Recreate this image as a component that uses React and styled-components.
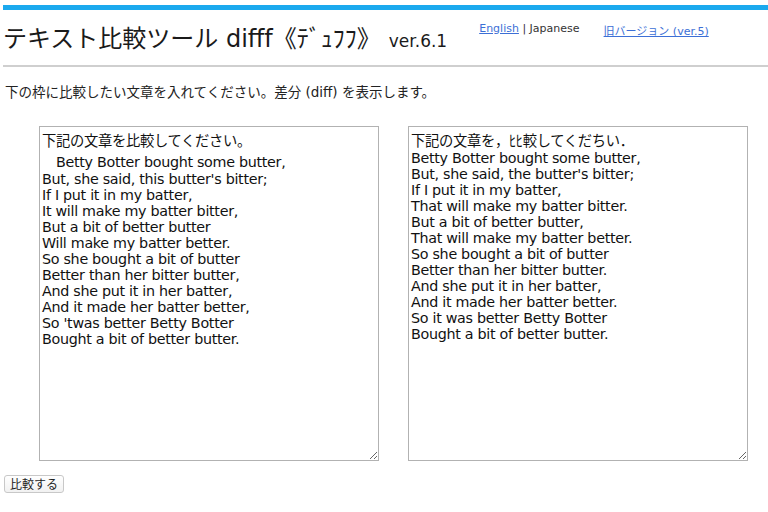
import React from 'react';
import styled, { createGlobalStyle } from 'styled-components';

const GlobalStyle = createGlobalStyle`
  html, body {
    margin: 0;
    padding: 0;
    background: #fff;
  }
  body {
    color: #222;
    font-family: "DejaVu Sans", "Noto Sans CJK JP", sans-serif;
  }
`;

const Page = styled.div`
  padding: 5px 0 0 3px;
`;

const TopBar = styled.div`
  height: 5px;
  background: #1ba9ee;
`;

const Header = styled.div`
  display: flex;
  align-items: flex-start;
  margin-top: 12px;
`;

const Title = styled.h1`
  margin: 0;
  font-size: 24px;
  font-weight: normal;
  line-height: 34px;
  color: #1a1a1a;
  white-space: nowrap;
`;

const Version = styled.span`
  font-size: 17px;
  margin-left: 8px;
`;

const Links = styled.div`
  display: flex;
  gap: 24px;
  margin-left: 32px;
  font-size: 11px;
  color: #333;
  white-space: nowrap;
`;

const Link = styled.a`
  color: #3c6fd6;
  text-decoration: underline;
`;

const Rule = styled.div`
  height: 2px;
  background: #cfcfcf;
  margin-top: 7px;
`;

const Lead = styled.p`
  margin: 16px 0 0 2px;
  font-size: 13.5px;
  line-height: 18px;
`;

const Editors = styled.div`
  display: flex;
  gap: 29px;
  margin: 25px 0 0 36px;
`;

const TextBox = styled.textarea`
  width: 340px;
  height: 335px;
  box-sizing: border-box;
  margin: 0;
  padding: 2px;
  border: 1px solid #b2b2b2;
  font-family: "DejaVu Sans", "Noto Sans CJK JP", sans-serif;
  font-size: 14.3px;
  letter-spacing: -0.3px;
  line-height: normal;
  color: #111;
  background: #fff;
  outline: none;
`;

const CompareButton = styled.button`
  display: block;
  margin: 14px 0 0 1px;
  padding: 0 5px;
  height: 18px;
  font-family: "Noto Sans CJK JP", sans-serif;
  font-size: 12px;
  line-height: 16px;
  color: #222;
  background: linear-gradient(#fff, #f1f1f1);
  border: 1px solid #c8c8c8;
  border-radius: 3px;
`;

const original = `下記の文章を比較してください。
　Betty Botter bought some butter,
But, she said, this butter's bitter;
If I put it in my batter,
It will make my batter bitter,
But a bit of better butter
Will make my batter better.
So she bought a bit of butter
Better than her bitter butter,
And she put it in her batter,
And it made her batter better,
So 'twas better Betty Botter
Bought a bit of better butter.`;

const revised = `下記の文章を，ﾋﾋ較してくだちい．
Betty Botter bought some butter,
But, she said, the butter's bitter;
If I put it in my batter,
That will make my batter bitter.
But a bit of better butter,
That will make my batter better.
So she bought a bit of butter
Better than her bitter butter.
And she put it in her batter,
And it made her batter better.
So it was better Betty Botter
Bought a bit of better butter.`;

export default function App() {
  return (
    <Page>
      <GlobalStyle />
      <TopBar />
      <Header>
        <Title>
          テキスト比較ツール difff《ﾃﾞｭﾌﾌ》<Version>ver.6.1</Version>
        </Title>
        <Links>
          <span>
            <Link href="#">English</Link> | Japanese
          </span>
          <Link href="#">旧バージョン (ver.5)</Link>
        </Links>
      </Header>
      <Rule />
      <Lead>下の枠に比較したい文章を入れてください。差分 (diff) を表示します。</Lead>
      <Editors>
        <TextBox defaultValue={original} spellCheck={false} />
        <TextBox defaultValue={revised} spellCheck={false} />
      </Editors>
      <CompareButton>比較する</CompareButton>
    </Page>
  );
}
